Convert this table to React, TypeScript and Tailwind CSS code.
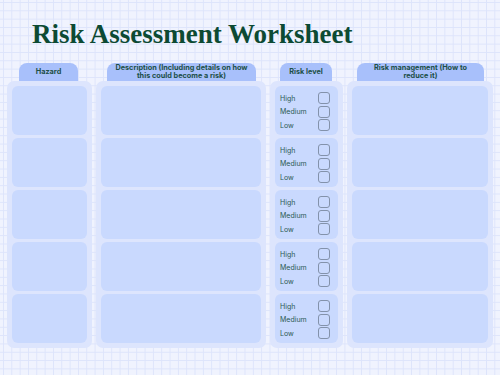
const rows = [0, 1, 2, 3, 4]

type Col = {
  title: string[]
  width: string
  tabMargin: string
  kind: 'plain' | 'risk'
}

const columns: Col[] = [
  { title: ['Hazard'], width: 'w-[85px]', tabMargin: 'ml-[12px] mr-[14px]', kind: 'plain' },
  { title: ['Description (Including details on how', 'this could become a risk)'], width: 'w-[170px]', tabMargin: 'ml-[11px] mr-[10px]', kind: 'plain' },
  { title: ['Risk level'], width: 'w-[73px]', tabMargin: 'ml-[10px] mr-[11px]', kind: 'risk' },
  { title: ['Risk management (How to', 'reduce it)'], width: 'w-[146px]', tabMargin: 'ml-[10px] mr-[9px]', kind: 'plain' },
]

function RiskCell() {
  return (
    <div className="h-[49px] rounded-[6px] bg-[#c9d9fe] pt-[6px] pl-[5px] pr-[8px] flex flex-col gap-[1.5px]">
      {['High', 'Medium', 'Low'].map(level => (
        <div key={level} className="flex items-center justify-between h-[12px]">
          <span className="text-[7px] leading-none text-[#2b5a52]">{level}</span>
          <span className="w-[12px] h-[12px] rounded-[3px] border border-[#8392ab]" />
        </div>
      ))}
    </div>
  )
}

export default function App() {
  return (
    <div
      className="w-[500px] h-[375px] overflow-hidden bg-[#f0f3fe] bg-[linear-gradient(to_right,#dde4fb_1px,transparent_1px),linear-gradient(to_bottom,#dde4fb_1px,transparent_1px)] bg-[size:8.333px_8.333px] bg-[position:3px_2px]"
      style={{ fontFamily: 'Inter, "Open Sans", sans-serif' }}
    >
      {/* Title */}
      <h1
        className="pl-[32px] pt-[19px] text-[27px] leading-[30px] font-bold text-[#0c4a33]"
        style={{ fontFamily: '"Liberation Serif", serif' }}
      >
        Risk Assessment Worksheet
      </h1>

      {/* Columns */}
      <div className="flex gap-[4px] pl-[7px] mt-[14px]">
        {columns.map(col => (
          <div key={col.title[0]} className={`${col.width} flex flex-col`}>
            <div className={`${col.tabMargin} h-[18px] rounded-t-[8px] bg-[#a8c0fb] flex flex-col items-center justify-center`}>
              {col.title.map(line => (
                <span key={line} className="text-[7.3px] leading-[8px] font-bold text-[#1c4f48] whitespace-nowrap">
                  {line}
                </span>
              ))}
            </div>
            <div className="rounded-[7px] bg-[#dde5fd] p-[5px] flex flex-col gap-[3px]">
              {rows.map(r =>
                col.kind === 'risk' ? (
                  <RiskCell key={r} />
                ) : (
                  <div key={r} className="h-[49px] rounded-[6px] bg-[#c9d9fe]" />
                )
              )}
            </div>
          </div>
        ))}
      </div>
    </div>
  )
}
